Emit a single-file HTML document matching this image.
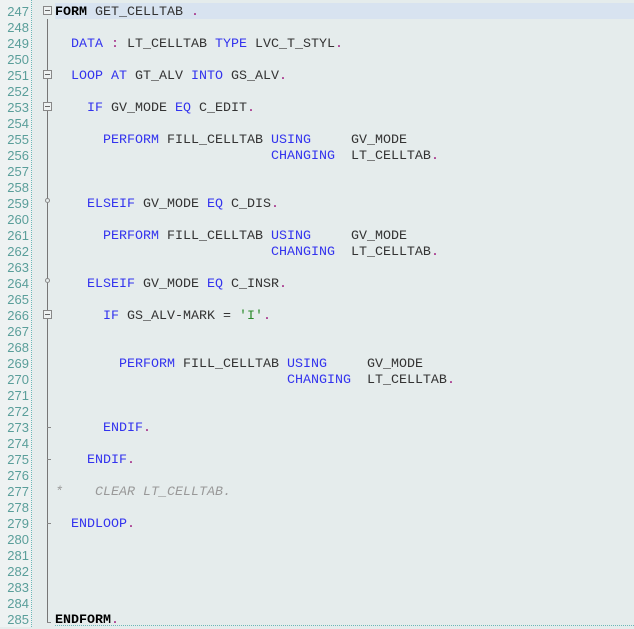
<!DOCTYPE html>
<html><head><meta charset="utf-8"><style>
body{margin:0;width:634px;height:627px;background:#e5ecec;position:relative;overflow:hidden;font-family:"Liberation Mono",monospace;font-size:13.33px}
.g{position:absolute;left:0;top:0;width:31px;height:627px;background:#eef2f2;border-right:1px dotted #6cb8b8}
.n{position:absolute;left:0;width:29px;text-align:right;color:#5a9e9a;font-family:"Liberation Sans",sans-serif;font-size:13px;line-height:16px;margin-top:1px}
.l{position:absolute;left:55px;line-height:16px;white-space:pre;color:#333;margin-top:2px}
.k{color:#3333ee}.p{color:#a02080}.s{color:#2a8a2a}.c{color:#999;font-style:italic}.b{color:#000;font-weight:bold}
.hl{position:absolute;left:55px;right:0;top:3px;height:16px;background:#d8e3f0}
.v{position:absolute;left:47px;top:19px;width:1px;height:604px;background:#777}
.bx{position:absolute;left:43px;width:7px;height:7px;border:1px solid #888;background:#eef2f2}
.bx:after{content:"";position:absolute;left:1px;top:3px;width:5px;height:1px;background:#666}
.ci{position:absolute;left:45px;width:3px;height:3px;border:1px solid #888;border-radius:50%;background:#e5ecec}
.t{position:absolute;left:47px;width:4px;height:1px;background:#888}
.bl{position:absolute;left:55px;right:0;top:625px;border-top:1px dotted #6cb8b8}
</style></head><body>
<div class="g"></div>
<div class="hl"></div>
<div class="v"></div>
<div class="bx" style="top:6px"></div>
<div class="bx" style="top:70px"></div>
<div class="bx" style="top:102px"></div>
<div class="bx" style="top:310px"></div>
<div class="ci" style="top:198px"></div>
<div class="ci" style="top:278px"></div>
<div class="t" style="top:427px"></div>
<div class="t" style="top:459px"></div>
<div class="t" style="top:523px"></div>
<div class="t" style="top:622px"></div>
<div class="bl"></div>
<div class="n" style="top:3px">247</div><div class="n" style="top:19px">248</div><div class="n" style="top:35px">249</div><div class="n" style="top:51px">250</div><div class="n" style="top:67px">251</div><div class="n" style="top:83px">252</div><div class="n" style="top:99px">253</div><div class="n" style="top:115px">254</div><div class="n" style="top:131px">255</div><div class="n" style="top:147px">256</div><div class="n" style="top:163px">257</div><div class="n" style="top:179px">258</div><div class="n" style="top:195px">259</div><div class="n" style="top:211px">260</div><div class="n" style="top:227px">261</div><div class="n" style="top:243px">262</div><div class="n" style="top:259px">263</div><div class="n" style="top:275px">264</div><div class="n" style="top:291px">265</div><div class="n" style="top:307px">266</div><div class="n" style="top:323px">267</div><div class="n" style="top:339px">268</div><div class="n" style="top:355px">269</div><div class="n" style="top:371px">270</div><div class="n" style="top:387px">271</div><div class="n" style="top:403px">272</div><div class="n" style="top:419px">273</div><div class="n" style="top:435px">274</div><div class="n" style="top:451px">275</div><div class="n" style="top:467px">276</div><div class="n" style="top:483px">277</div><div class="n" style="top:499px">278</div><div class="n" style="top:515px">279</div><div class="n" style="top:531px">280</div><div class="n" style="top:547px">281</div><div class="n" style="top:563px">282</div><div class="n" style="top:579px">283</div><div class="n" style="top:595px">284</div><div class="n" style="top:611px">285</div>
<div class="l" style="top:3px"><span class="b">FORM</span> GET_CELLTAB <span class="p">.</span></div>
<div class="l" style="top:35px">  <span class="k">DATA</span> <span class="p">:</span> LT_CELLTAB <span class="k">TYPE</span> LVC_T_STYL<span class="p">.</span></div>
<div class="l" style="top:67px">  <span class="k">LOOP</span> <span class="k">AT</span> GT_ALV <span class="k">INTO</span> GS_ALV<span class="p">.</span></div>
<div class="l" style="top:99px">    <span class="k">IF</span> GV_MODE <span class="k">EQ</span> C_EDIT<span class="p">.</span></div>
<div class="l" style="top:131px">      <span class="k">PERFORM</span> FILL_CELLTAB <span class="k">USING</span>     GV_MODE</div>
<div class="l" style="top:147px">                           <span class="k">CHANGING</span>  LT_CELLTAB<span class="p">.</span></div>
<div class="l" style="top:195px">    <span class="k">ELSEIF</span> GV_MODE <span class="k">EQ</span> C_DIS<span class="p">.</span></div>
<div class="l" style="top:227px">      <span class="k">PERFORM</span> FILL_CELLTAB <span class="k">USING</span>     GV_MODE</div>
<div class="l" style="top:243px">                           <span class="k">CHANGING</span>  LT_CELLTAB<span class="p">.</span></div>
<div class="l" style="top:275px">    <span class="k">ELSEIF</span> GV_MODE <span class="k">EQ</span> C_INSR<span class="p">.</span></div>
<div class="l" style="top:307px">      <span class="k">IF</span> GS_ALV-MARK = <span class="s">'I'</span><span class="p">.</span></div>
<div class="l" style="top:355px">        <span class="k">PERFORM</span> FILL_CELLTAB <span class="k">USING</span>     GV_MODE</div>
<div class="l" style="top:371px">                             <span class="k">CHANGING</span>  LT_CELLTAB<span class="p">.</span></div>
<div class="l" style="top:419px">      <span class="k">ENDIF</span><span class="p">.</span></div>
<div class="l" style="top:451px">    <span class="k">ENDIF</span><span class="p">.</span></div>
<div class="l" style="top:483px"><span class="c">*    CLEAR LT_CELLTAB.</span></div>
<div class="l" style="top:515px">  <span class="k">ENDLOOP</span><span class="p">.</span></div>
<div class="l" style="top:611px"><span class="b">ENDFORM</span><span class="p">.</span></div>
</body></html>
